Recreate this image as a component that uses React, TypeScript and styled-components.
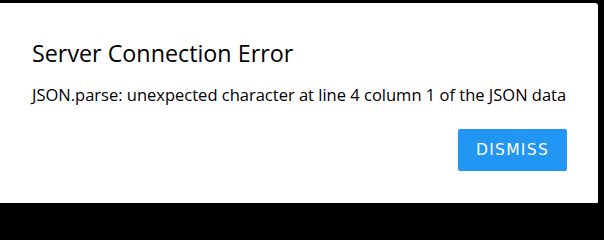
import React from "react";
import styled, { createGlobalStyle } from "styled-components";

const GlobalStyle = createGlobalStyle`
  html, body {
    margin: 0;
    padding: 0;
    background: #000;
    overflow: hidden;
  }
  body {
    font-family: "Open Sans", "Noto Sans", sans-serif;
  }
`;

const Backdrop = styled.div`
  width: 604px;
  height: 203px;
  padding-top: 3px;
  box-sizing: border-box;
`;

const Dialog = styled.div`
  width: 598px;
  height: 201px;
  background: #fff;
  border-radius: 0 3px 3px 0;
  box-sizing: border-box;
  padding: 0 31px 0 32px;
  display: flex;
  flex-direction: column;
`;

const Title = styled.h2`
  margin: 34px 0 0;
  font-size: 23.3px;
  font-weight: 400;
  line-height: 32px;
  color: #000;
`;

const Message = styled.p`
  margin: 14px 0 0;
  font-size: 16.5px;
  line-height: 24px;
  color: #000;
  white-space: nowrap;
`;

const Actions = styled.div`
  display: flex;
  justify-content: flex-end;
  margin-top: 22px;
`;

const Button = styled.button`
  width: 109px;
  height: 42px;
  border: none;
  border-radius: 2px;
  background: #2196f3;
  color: #fff;
  font-family: "DejaVu Sans", Verdana, sans-serif;
  font-size: 15.5px;
  letter-spacing: 1.3px;
  text-transform: uppercase;
  cursor: pointer;
`;

export default function App() {
  return (
    <>
      <GlobalStyle />
      <Backdrop>
        <Dialog>
          <Title>Server Connection Error</Title>
          <Message>
            JSON.parse: unexpected character at line 4 column 1 of the JSON data
          </Message>
          <Actions>
            <Button>Dismiss</Button>
          </Actions>
        </Dialog>
      </Backdrop>
    </>
  );
}
